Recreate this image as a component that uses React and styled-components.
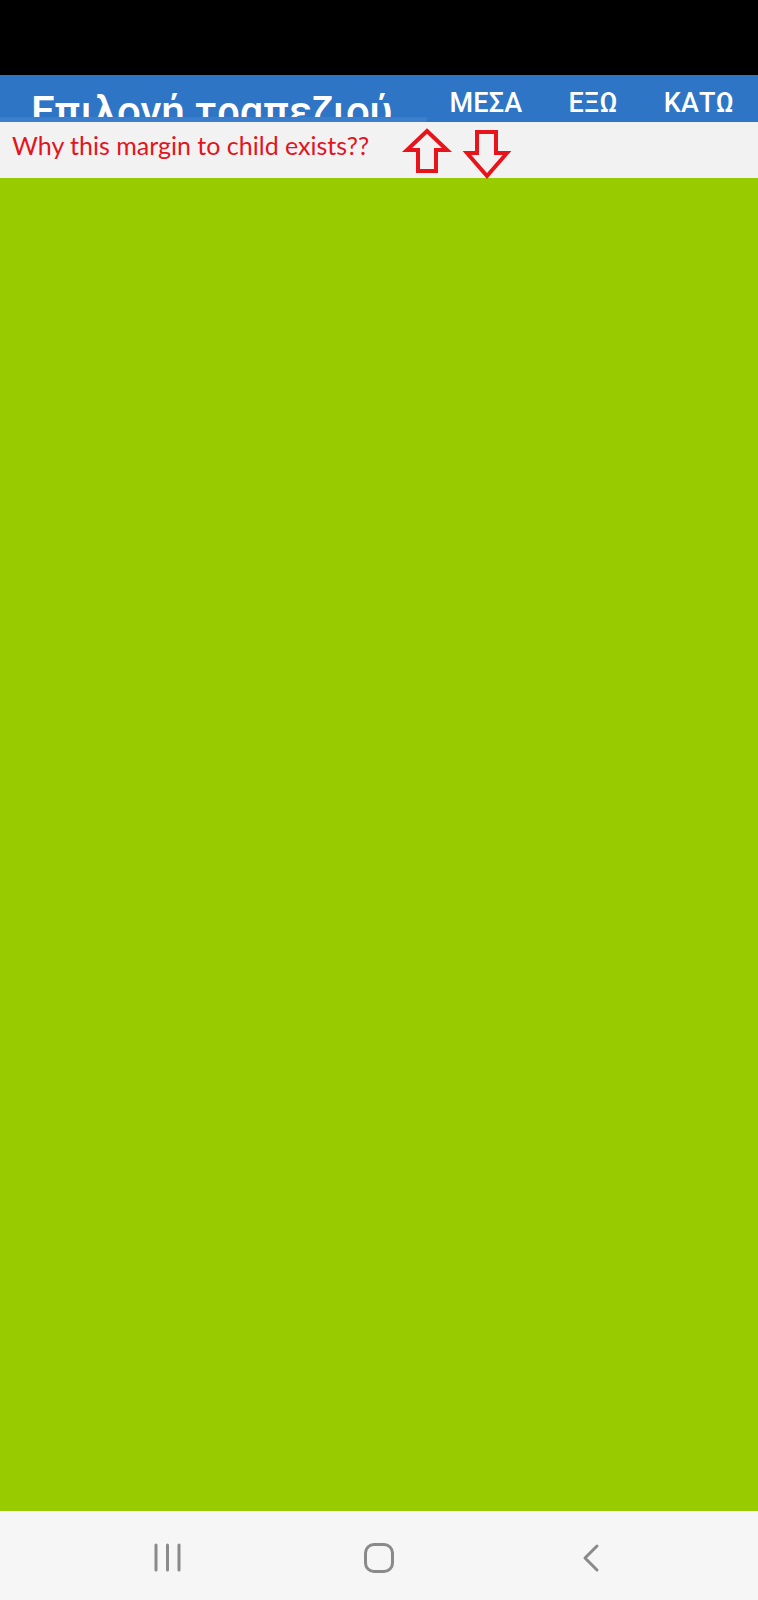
import React from "react";
import styled, { createGlobalStyle } from "styled-components";

const Global = createGlobalStyle`
  html, body { margin: 0; padding: 0; background: #000; }
  #root { height: 1600px; }
`;

const Screen = styled.div`
  width: 758px;
  height: 1600px;
  display: flex;
  flex-direction: column;
  overflow: hidden;
`;

const StatusBar = styled.div`
  height: 75px;
  flex: none;
  background: #000;
`;

const AppBar = styled.header`
  height: 47px;
  flex: none;
  background: #2f75c5;
  display: flex;
  align-items: flex-start;
  overflow: hidden;
  color: #fff;
  font-family: Roboto, "Noto Sans", sans-serif;
`;

const TitleBox = styled.div`
  flex: 1;
  min-width: 0;
  height: 42px;
  overflow: hidden;
  border-bottom: 5px solid #3b7ecb;
`;

const Title = styled.h1`
  margin: 0;
  padding: 16px 0 0 31px;
  font-size: 42px;
  line-height: 1;
  font-weight: 500;
  letter-spacing: -0.3px;
  white-space: nowrap;
`;

const Tabs = styled.nav`
  display: flex;
  flex: none;
  padding-right: 1px;
`;

const Tab = styled.span`
  padding: 15px 23px 0;
  font-size: 27px;
  line-height: 1;
  font-weight: 500;
  letter-spacing: 0.2px;
`;

const Note = styled.div`
  position: relative;
  height: 56px;
  flex: none;
  background: #f2f2f2;
`;

const NoteText = styled.p`
  margin: 0;
  padding: 11px 0 0 12px;
  font-family: Lato, "Open Sans", sans-serif;
  font-size: 25px;
  line-height: 1;
  color: #e3141d;
`;

const Arrow = styled.svg`
  position: absolute;
  top: ${(p) => p.$top}px;
  left: ${(p) => p.$left}px;
  overflow: visible;
  z-index: 2;
`;

const Content = styled.main`
  flex: 1;
  background: #99cc00;
`;

const NavBar = styled.footer`
  height: 89px;
  flex: none;
  background: #f6f6f6;
  display: flex;
  justify-content: center;
  align-items: flex-start;
`;

const NavSlot = styled.div`
  width: 212px;
  display: flex;
  justify-content: center;
  padding-top: 32px;
`;

export default function App() {
  return (
    <>
      <Global />
      <Screen>
        <StatusBar />
        <AppBar>
          <TitleBox>
            <Title>Επιλογή τραπεζιού</Title>
          </TitleBox>
          <Tabs>
            <Tab>ΜΕΣΑ</Tab>
            <Tab>ΕΞΩ</Tab>
            <Tab>ΚΑΤΩ</Tab>
          </Tabs>
        </AppBar>
        <Note>
          <NoteText>Why this margin to child exists??</NoteText>
          <Arrow $left={405} $top={7} width="44" height="44" viewBox="0 0 44 44">
            <polygon
              points="22,2 42,21 31,21 31,42 13,42 13,21 2,21"
              fill="none"
              stroke="#e8141c"
              strokeWidth="4"
              strokeLinejoin="miter"
            />
          </Arrow>
          <Arrow $left={465} $top={8} width="44" height="49" viewBox="0 0 44 49">
            <polygon
              points="12,2 31,2 31,23 42,23 22,46 2,23 12,23"
              fill="none"
              stroke="#e8141c"
              strokeWidth="4"
              strokeLinejoin="miter"
            />
          </Arrow>
        </Note>
        <Content />
        <NavBar>
          <NavSlot>
            <svg width="27" height="29" viewBox="0 0 27 29">
              <g stroke="#8a8a8a" strokeWidth="3" strokeLinecap="round">
                <line x1="2" y1="2" x2="2" y2="27" />
                <line x1="13.5" y1="2" x2="13.5" y2="27" />
                <line x1="25" y1="2" x2="25" y2="27" />
              </g>
            </svg>
          </NavSlot>
          <NavSlot>
            <svg width="30" height="30" viewBox="0 0 30 30">
              <rect x="1.5" y="1.5" width="27" height="27" rx="8.5" fill="none" stroke="#8a8a8a" strokeWidth="3" />
            </svg>
          </NavSlot>
          <NavSlot>
            <svg width="18" height="30" viewBox="0 0 18 30">
              <polyline points="15,3 3,15 15,27" fill="none" stroke="#8a8a8a" strokeWidth="3" strokeLinecap="round" strokeLinejoin="round" />
            </svg>
          </NavSlot>
        </NavBar>
      </Screen>
    </>
  );
}
